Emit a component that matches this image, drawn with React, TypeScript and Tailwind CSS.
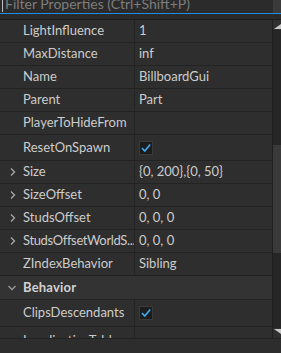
import React from "react";

type Row =
  | { kind: "prop"; name: string; value?: string; check?: boolean; expand?: boolean; tight?: boolean; h: string }
  | { kind: "header"; name: string; h: string };

const rows: Row[] = [
  { kind: "prop", name: "LightInfluence", value: "1", h: "h-[23px]" },
  { kind: "prop", name: "MaxDistance", value: "inf", h: "h-[23px]" },
  { kind: "prop", name: "Name", value: "BillboardGui", h: "h-[23px]" },
  { kind: "prop", name: "Parent", value: "Part", h: "h-[23px]" },
  { kind: "prop", name: "PlayerToHideFrom", value: "", h: "h-[23px]" },
  { kind: "prop", name: "ResetOnSpawn", check: true, h: "h-[26px]" },
  { kind: "prop", name: "Size", value: "{0, 200},{0, 50}", expand: true, h: "h-[23px]" },
  { kind: "prop", name: "SizeOffset", value: "0, 0", expand: true, h: "h-[23px]" },
  { kind: "prop", name: "StudsOffset", value: "0, 0, 0", expand: true, h: "h-[23px]" },
  { kind: "prop", name: "StudsOffsetWorldS...", value: "0, 0, 0", expand: true, tight: true, h: "h-[23px]" },
  { kind: "prop", name: "ZIndexBehavior", value: "Sibling", h: "h-[23px]" },
  { kind: "header", name: "Behavior", h: "h-[24px]" },
  { kind: "prop", name: "ClipsDescendants", check: true, h: "h-[27px]" },
  { kind: "prop", name: "LocalizationTable", value: "", h: "h-[28px]" },
];

function ChevronRight() {
  return (
    <svg width="8" height="10" viewBox="0 0 8 10" className="shrink-0">
      <polyline points="2,1.5 5.5,5 2,8.5" fill="none" stroke="#a8a8a8" strokeWidth="1.3" />
    </svg>
  );
}

function ChevronDown() {
  return (
    <svg width="10" height="8" viewBox="0 0 10 8" className="shrink-0">
      <polyline points="1.5,2 5,5.5 8.5,2" fill="none" stroke="#9a9a9a" strokeWidth="1.3" />
    </svg>
  );
}

function Check() {
  return (
    <div className="w-[14px] h-[14px] bg-[#1c1c1c] border border-[#3a3a3a] flex items-center justify-center">
      <svg width="12" height="12" viewBox="0 0 12 12">
        <polyline points="2,6.2 4.8,9 10.2,2.5" fill="none" stroke="#3fa7ef" strokeWidth="1.7" />
      </svg>
    </div>
  );
}

export default function App() {
  return (
    <div
      className="w-[281px] h-[353px] bg-[#2e2e2e] overflow-hidden flex flex-col text-[13px] text-[#cccccc]"
      style={{ fontFamily: "Lato, 'Open Sans', sans-serif" }}
    >
      {/* filter bar */}
      <div className="h-[13px] flex shrink-0 bg-[#2b2b2b] overflow-hidden">
        <div className="flex-1 relative overflow-hidden">
          <div className="absolute left-[2px] top-0 w-px h-[12px] bg-[#bdbdbd]" />
          <div className="pl-[5px] mt-[-5px] leading-[18px] text-[#7d7d7d] whitespace-nowrap text-[14px]">
            Filter Properties (Ctrl+Shift+P)
          </div>
        </div>
        <div className="w-[8px] bg-[#3a3a3a]" />
      </div>
      <div className="h-px bg-[#1f8fe6] shrink-0" />
      <div className="h-[5px] bg-[#2a2a2a] shrink-0" />
      <div className="h-px bg-[#1f1f1f] shrink-0" />

      {/* body */}
      <div className="h-[318px] flex shrink-0 overflow-hidden">
        <div className="w-[272px] flex flex-col overflow-hidden">
          {rows.map((r, i) =>
            r.kind === "header" ? (
              <div
                key={i}
                className={`${r.h} shrink-0 flex items-center bg-[#333333] border-b border-[#232323]`}
              >
                <div className="w-[23px] shrink-0 flex justify-center pl-[1px]">
                  <ChevronDown />
                </div>
                <span className="font-bold text-[#d2d2d2] tracking-[0.2px]">{r.name}</span>
              </div>
            ) : (
              <div key={i} className={`${r.h} shrink-0 flex border-b border-[#232323]`}>
                <div className="w-[135px] shrink-0 flex items-center border-r border-[#232323] overflow-hidden">
                  <div className="w-[23px] shrink-0 flex justify-center pl-[2px]">
                    {r.expand ? <ChevronRight /> : null}
                  </div>
                  <span className={`whitespace-nowrap ${r.tight ? "tracking-[-0.35px]" : ""}`}>{r.name}</span>
                </div>
                <div className="flex-1 flex items-center pl-[4px] whitespace-nowrap">
                  {r.check ? <Check /> : <span>{r.value}</span>}
                </div>
              </div>
            )
          )}
        </div>
        {/* scrollbar */}
        <div className="w-[9px] flex flex-col bg-[#262626] border-l border-[#1f1f1f]">
          <div className="h-[10px] bg-[#303030] flex items-end justify-center pb-[1px]">
            <svg width="7" height="5" viewBox="0 0 7 5">
              <polygon points="0,5 7,5 7,0" fill="#c8c8c8" />
            </svg>
          </div>
          <div className="h-[115px]" />
          <div className="h-[108px] bg-[#3a3a3a]" />
          <div className="flex-1" />
          <div className="h-[10px] bg-[#303030] flex items-start justify-center pt-[1px]">
            <svg width="7" height="5" viewBox="0 0 7 5">
              <polygon points="0,0 7,0 7,5" fill="#c8c8c8" />
            </svg>
          </div>
        </div>
      </div>
      <div className="h-px bg-[#232323] shrink-0" />
      <div className="flex-1 bg-[#2d2d2d]" />
    </div>
  );
}
